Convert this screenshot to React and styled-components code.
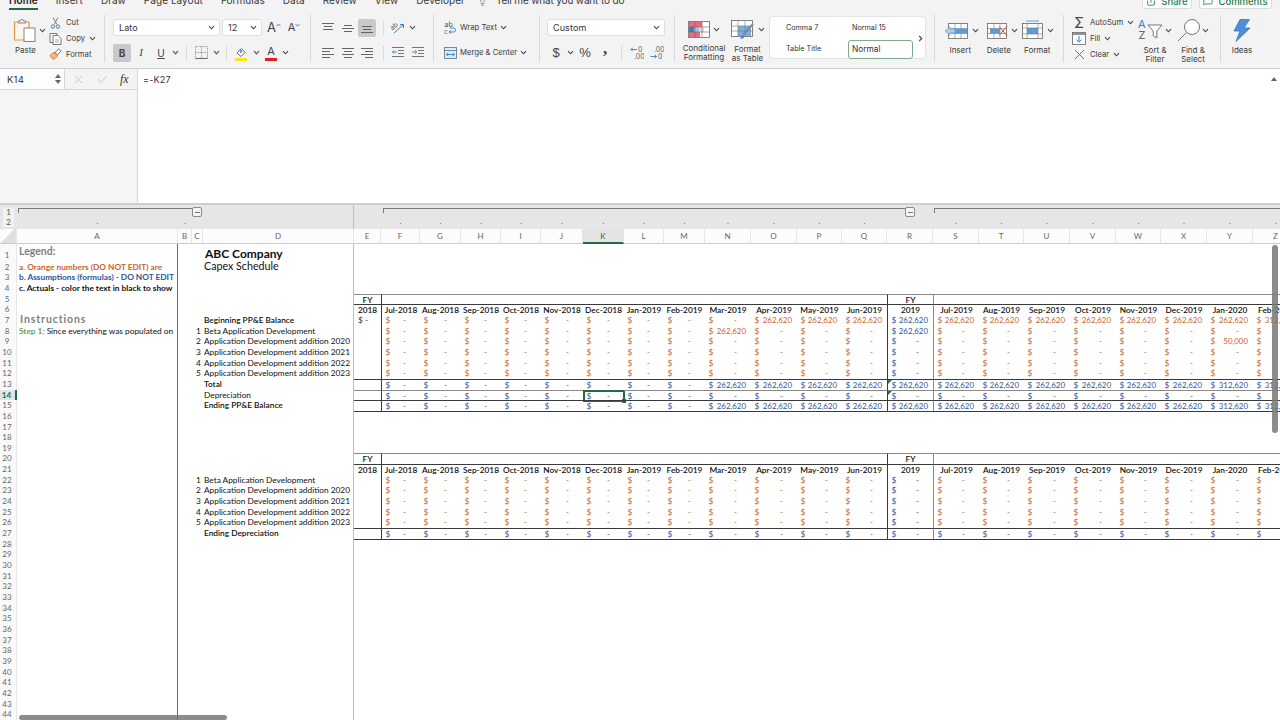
// App.jsx - Excel for Mac window with a capex schedule
import styled, { createGlobalStyle } from 'styled-components';
import { Check, Lightbulb, MessageSquare, Share, X } from 'lucide-react';

const ORANGE = '#c8642c';
const BLUE = '#2f5597';
const SANS = "'Lato', 'Open Sans', sans-serif";
const UI = "'Inter', 'Open Sans', sans-serif";

// column widths: row header, A, B, C, D, E, F ... Z
const LEFT_COLS = [17, 161, 14, 11, 151];
const RIGHT_COLS = [27, 39, 41, 40, 40, 42, 41, 40, 41, 46, 46, 45, 45, 46, 46, 45, 46, 46, 45, 46, 46, 46];
const track = (cols) => cols.map((c) => `${c}px`).join(' ');
const COLS = [...LEFT_COLS, ...RIGHT_COLS];
const LETTERS = 'ABCDEFGHIJKLMNOPQRSTUVWXYZ'.split('');

const MONTHS = [
  'Jul-2018', 'Aug-2018', 'Sep-2018', 'Oct-2018', 'Nov-2018', 'Dec-2018', 'Jan-2019', 'Feb-2019',
  'Mar-2019', 'Apr-2019', 'May-2019', 'Jun-2019', '2019', 'Jul-2019', 'Aug-2019', 'Sep-2019',
  'Oct-2019', 'Nov-2019', 'Dec-2019', 'Jan-2020', 'Feb-2020',
];

const R_INDEX = 12;
const SMALL = '262,620';
const BIG = '312,620';

const LINES = { 5: 'gray', 6: 'dark', 13: 'dark', 14: 'gray', 15: 'dark', 16: 'dark', 20: 'gray', 21: 'dark', 27: 'dark', 28: 'dark' };

const DLABELS = {
  7: ['', 'Beginning PP&E Balance', true],
  8: ['1', 'Beta Application Development'],
  9: ['2', 'Application Development addition 2020'],
  10: ['3', 'Application Development addition 2021'],
  11: ['4', 'Application Development addition 2022'],
  12: ['5', 'Application Development addition 2023'],
  13: ['', 'Total', true],
  14: ['', 'Depreciation'],
  15: ['', 'Ending PP&E Balance', true],
  22: ['1', 'Beta Application Development'],
  23: ['2', 'Application Development addition 2020'],
  24: ['3', 'Application Development addition 2021'],
  25: ['4', 'Application Development addition 2022'],
  26: ['5', 'Application Development addition 2023'],
  27: ['', 'Ending Depreciation', true],
};

function moneyValue(row, i) {
  if (row === 7) {
    if (i < 9) return '-';
    return i === 20 ? BIG : SMALL;
  }
  if (row === 8) return i === 8 || i === R_INDEX ? SMALL : '-';
  if (row === 9) return i === 19 ? '50,000' : '-';
  if (row === 13 || row === 15) {
    if (i < 8) return '-';
    return i >= 19 ? BIG : SMALL;
  }
  return '-';
}

const isMoneyRow = (n) => (n >= 7 && n <= 15) || (n >= 22 && n <= 27);
const isBlueRow = (n) => (n >= 13 && n <= 15) || n === 27;
const inTable = (n) => (n >= 5 && n <= 15) || (n >= 20 && n <= 27);

const GlobalStyle = createGlobalStyle`
  html, body {
    margin: 0;
    padding: 0;
    background: #fff;
    overflow: hidden;
  }
`;

const Page = styled.div`
  position: relative;
  width: 1280px;
  height: 720px;
  overflow: hidden;
  font-family: ${UI};
  color: #333;
`;

/* ribbon */

const Ribbon = styled.div`
  height: 68px;
  background: #f3f3f3;
  border-bottom: 1px solid #cfcfcf;
  overflow: hidden;
`;

const TabRow = styled.div`
  display: flex;
  align-items: flex-start;
  height: 17px;
  margin-top: -7px;
  padding-left: 9px;
  gap: 18px;
  font-size: 10px;
  line-height: 15px;
  color: #3a3a3a;
`;

const Tab = styled.div`
  height: 15px;
  letter-spacing: 0.05px;
  font-weight: ${(p) => (p.$active ? 600 : 400)};
  color: ${(p) => (p.$active ? '#222' : '#3a3a3a')};
  border-bottom: ${(p) => (p.$active ? '2px solid #1d6f42' : '2px solid transparent')};
`;

const TellMe = styled.div`
  display: flex;
  align-items: center;
  gap: 8px;
  height: 15px;
  margin-left: -6px;
  letter-spacing: -0.15px;
`;

const ShareArea = styled.div`
  display: flex;
  gap: 7px;
  margin-left: auto;
  margin-right: 8px;
`;

const ShareButton = styled.div`
  display: flex;
  align-items: center;
  justify-content: center;
  gap: 5px;
  width: ${(p) => p.$w}px;
  height: 16px;
  background: #fff;
  border: 1px solid #dcdcdc;
  border-radius: 3px;
  box-sizing: border-box;
  color: #1d7a4b;
  font-weight: 500;
  font-size: 9.5px;
`;

const Toolbar = styled.div`
  display: flex;
  height: 47px;
  margin-top: 5px;
`;

const Group = styled.div`
  flex: none;
  box-sizing: border-box;
  width: ${(p) => p.$w}px;
  height: 47px;
  padding-left: ${(p) => p.$pl || 0}px;
  padding-top: ${(p) => p.$pt ?? 4}px;
  border-right: ${(p) => (p.$plain ? 'none' : '1px solid #d9d9d9')};
  display: flex;
  flex-direction: ${(p) => (p.$row ? 'row' : 'column')};
  gap: ${(p) => (p.$row ? 0 : 8)}px;
`;

const Line = styled.div`
  display: flex;
  align-items: center;
  height: 17px;
  gap: ${(p) => p.$gap || 0}px;
`;

const Slot = styled.div`
  flex: none;
  display: flex;
  align-items: center;
  justify-content: center;
  position: relative;
  box-sizing: border-box;
  width: ${(p) => p.$w}px;
  height: 18px;
  margin-left: ${(p) => p.$ml || 0}px;
  border-radius: 2px;
  background: ${(p) => (p.$on ? '#c9c9c9' : 'transparent')};
`;

const Divider = styled.div`
  flex: none;
  width: 1px;
  height: 14px;
  background: #dadada;
  margin-left: ${(p) => p.$ml || 0}px;
`;

const Select = styled.div`
  flex: none;
  display: flex;
  align-items: center;
  justify-content: space-between;
  box-sizing: border-box;
  width: ${(p) => p.$w}px;
  height: 17px;
  padding: 0 4px 0 5px;
  background: #fff;
  border: 1px solid #dedede;
  border-radius: 3px;
  font-size: 9px;
  letter-spacing: 0.1px;
  color: #333;
`;

const Letter = styled.span`
  font-family: ${(p) => p.$family || UI};
  font-size: ${(p) => p.$size || 10}px;
  font-weight: ${(p) => p.$weight || 400};
  font-style: ${(p) => (p.$italic ? 'italic' : 'normal')};
  text-decoration: ${(p) => (p.$under ? 'underline' : 'none')};
  color: ${(p) => p.$color || '#444'};
  line-height: 1;
  padding-bottom: ${(p) => p.$raise || 0}px;
`;

const Label = styled.span`
  font-size: 7.7px;
  color: #3c3c3c;
  white-space: nowrap;
`;

const ColorBar = styled.div`
  position: absolute;
  left: ${(p) => p.$left}px;
  bottom: 1px;
  width: 12px;
  height: 3px;
  background: ${(p) => p.$color};
`;

const ListColumn = styled.div`
  flex: none;
  display: flex;
  flex-direction: column;
  width: ${(p) => p.$w}px;
  margin-left: ${(p) => p.$ml || 0}px;
`;

const ListRow = styled.div`
  display: flex;
  align-items: center;
  height: 17px;
  gap: ${(p) => p.$gap ?? 4}px;
`;

const ListIcon = styled.div`
  flex: none;
  display: flex;
  justify-content: center;
  width: 14px;
`;

const LargeButton = styled.div`
  flex: none;
  display: flex;
  flex-direction: column;
  align-items: center;
  width: ${(p) => p.$w}px;
  padding-top: 4px;
`;

const LargeIcon = styled.div`
  display: flex;
  align-items: center;
  gap: ${(p) => p.$gap ?? 3}px;
  height: 22px;
  margin-bottom: 4.5px;
  margin-left: ${(p) => p.$ml || 0}px;
`;

const LargeLabel = styled.div`
  font-size: 8px;
  line-height: 9px;
  text-align: center;
  white-space: nowrap;
  color: #3c3c3c;
`;

const Gallery = styled.div`
  flex: none;
  box-sizing: border-box;
  display: grid;
  grid-template-columns: 62px 65px 14px;
  grid-template-rows: 21.5px 21.5px;
  align-items: center;
  width: 157px;
  height: 43px;
  margin-top: 1px;
  padding-left: 16px;
  background: #fff;
  border: 1px solid #e3e3e3;
  border-radius: 4px;
`;

const GalleryItem = styled.div`
  box-sizing: border-box;
  height: ${(p) => (p.$on ? '19px' : 'auto')};
  padding-left: ${(p) => p.$pl || 0}px;
  font-size: ${(p) => (p.$on ? 8.3 : 7.2)}px;
  line-height: 16px;
  color: #333;
  border: ${(p) => (p.$on ? '1.5px solid #79ad8c' : 'none')};
  border-radius: 3px;
`;

const GalleryArrow = styled.div`
  grid-column: 3;
  grid-row: 1 / span 2;
  display: flex;
  justify-content: center;
`;

/* formula bar */

const FormulaArea = styled.div`
  display: flex;
  height: 136px;
  border-bottom: 2px solid #cfcfcf;
  box-sizing: border-box;
`;

const FormulaSide = styled.div`
  flex: none;
  width: 138px;
  display: flex;
  flex-direction: column;
  background: #f5f5f5;
  border-right: 1px solid #d6d6d6;
  box-sizing: border-box;
`;

const NameRow = styled.div`
  display: flex;
  align-items: center;
  height: 20px;
  background: #f3f3f3;
  border-bottom: 1px solid #d6d6d6;
`;

const NameBox = styled.div`
  flex: none;
  display: flex;
  align-items: center;
  justify-content: space-between;
  box-sizing: border-box;
  width: 65px;
  height: 20px;
  padding: 0 3px 0 7px;
  background: #fdfdfd;
  border-right: 1px solid #d6d6d6;
  font-size: 9.5px;
  letter-spacing: 0.2px;
  color: #333;
`;

const Stepper = styled.div`
  display: flex;
  flex-direction: column;
  gap: 2px;
`;

const FormulaTools = styled.div`
  display: flex;
  align-items: center;
  padding-left: 7px;
  gap: 11px;
`;

const FormulaInput = styled.div`
  position: relative;
  flex: 1;
  padding: 4px 0 0 5px;
  font-size: 9px;
  line-height: 13px;
  letter-spacing: 0.2px;
  color: #333;
  background: #fff;
`;

const ScrollCaret = styled.div`
  position: absolute;
  display: flex;
  top: 8px;
  right: 3px;
`;

/* sheet */

const OutlineBar = styled.div`
  display: flex;
  height: 24px;
  background: #e6e6e6;
`;

const OutlinePane = styled.div`
  flex: none;
  display: flex;
  flex-direction: column;
  box-sizing: border-box;
  width: ${(p) => p.$w}px;
  border-right: ${(p) => (p.$frozen ? '1px solid #bdbdbd' : 'none')};
  overflow: hidden;
`;

const BracketRow = styled.div`
  display: flex;
  align-items: flex-start;
  height: 12px;
  padding-top: 3px;
  padding-left: ${(p) => p.$pl}px;
  box-sizing: border-box;
`;

const Bracket = styled.div`
  flex: none;
  box-sizing: border-box;
  width: ${(p) => p.$w}px;
  height: 5px;
  margin-left: ${(p) => p.$ml || 0}px;
  border-top: 1.5px solid #7a7a7a;
  border-left: 1.5px solid #7a7a7a;
`;

const MinusBox = styled.div`
  flex: none;
  display: flex;
  align-items: center;
  justify-content: center;
  box-sizing: border-box;
  width: 10px;
  height: 10px;
  margin-top: -1px;
  background: #f4f4f4;
  border: 1px solid #8a8a8a;
  border-radius: 2px;
  &::before {
    content: '';
    width: 5px;
    height: 1px;
    background: #777;
  }
`;

const DotRow = styled.div`
  display: grid;
  grid-template-columns: ${(p) => track(p.$cols)};
  height: 12px;
`;

const Dot = styled.div`
  text-align: center;
  font-family: ${SANS};
  font-size: 8px;
  line-height: 8px;
  color: #555;
`;

const LevelStack = styled.div`
  position: absolute;
  left: 3px;
  top: 208px;
  display: flex;
  flex-direction: column;
`;

const LevelButton = styled.div`
  width: 11px;
  height: 9.5px;
  background: #f2f2f2;
  font-family: ${SANS};
  font-size: 8px;
  line-height: 9.5px;
  text-align: center;
  color: #555;
`;

const Row = styled.div`
  display: grid;
  grid-template-columns: ${track(COLS)};
  height: ${(p) => p.$h}px;
  font-family: ${SANS};
`;

const ColHeader = styled.div`
  box-sizing: border-box;
  height: 15px;
  text-align: center;
  font-size: 8px;
  line-height: 14px;
  color: ${(p) => (p.$on ? '#1d6f42' : '#666')};
  background: ${(p) => (p.$on ? '#e4e4e4' : '#fcfcfc')};
  border-right: 1px solid #e6e6e6;
  border-bottom: ${(p) => (p.$on ? '2px solid #1d6f42' : '1px solid #cccccc')};
`;

const Corner = styled(ColHeader)`
  background: linear-gradient(135deg, #fbfbfb 50%, #e0e0e0 50%);
`;

const RowHead = styled.div`
  box-sizing: border-box;
  height: 100%;
  text-align: center;
  padding-right: 2px;
  font-size: 8px;
  line-height: ${(p) => p.$lh}px;
  color: ${(p) => (p.$on ? '#1d6f42' : '#666')};
  font-weight: ${(p) => (p.$on ? 700 : 400)};
  background: ${(p) => (p.$on ? '#e4e4e4' : '#fafafa')};
  border-right: ${(p) => (p.$on ? '2px solid #1d6f42' : '1px solid #e6e6e6')};
`;

const lineStyle = (kind) => {
  if (kind === 'dark') return '1px solid #3a3a3a';
  if (kind === 'gray') return '1.5px solid #8a8a8a';
  return 'none';
};

const Cell = styled.div`
  position: relative;
  box-sizing: border-box;
  min-width: 0;
  height: 100%;
  padding-left: ${(p) => p.$pl || 0}px;
  white-space: nowrap;
  font-size: 8.3px;
  line-height: 10.67px;
  color: ${(p) => p.$color || '#111'};
  font-weight: ${(p) => (p.$bold ? 600 : 400)};
  text-align: ${(p) => (p.$center ? 'center' : 'left')};
  border-top: ${(p) => lineStyle(p.$top)};
  border-left: ${(p) => lineStyle(p.$left)};
  border-right: ${(p) => (p.$edge === 'dark' ? '1.5px solid #666' : p.$edge === 'light' ? '1px solid #bdbdbd' : 'none')};
`;

const MoneyCell = styled(Cell)`
  display: flex;
  justify-content: space-between;
`;

const Dollar = styled.span`
  margin-left: 3.5px;
`;

const Amount = styled.span`
  font-size: 7.9px;
  margin-right: ${(p) => (p.$dash ? 14 : 5)}px;
`;

const Selection = styled.div`
  position: absolute;
  left: 0;
  right: -1px;
  top: -1px;
  bottom: -1px;
  border: 2px solid #1d6f42;
  &::after {
    content: '';
    position: absolute;
    right: -3px;
    bottom: -3px;
    width: 4px;
    height: 4px;
    background: #1d6f42;
  }
`;

const ErrorMark = styled.div`
  position: absolute;
  top: 0;
  left: 0;
  width: 0;
  height: 0;
  border-top: 4px solid #1d7a3c;
  border-right: 4px solid transparent;
`;

const ColorText = styled.span`
  color: ${(p) => p.$color};
  font-weight: 700;
`;

const Heading = styled.div`
  font-size: ${(p) => p.$size}px;
  font-weight: ${(p) => p.$weight || 400};
  line-height: ${(p) => p.$lh}px;
  color: ${(p) => p.$color || '#111'};
  letter-spacing: ${(p) => p.$track || 0}px;
  margin-top: ${(p) => p.$mt || 0}px;
  margin-left: ${(p) => p.$ml || 0}px;
`;

const ScrollThumb = styled.div`
  position: absolute;
  background: rgba(120, 120, 120, 0.85);
  border-radius: 3px;
  left: ${(p) => p.$x}px;
  top: ${(p) => p.$y}px;
  width: ${(p) => p.$w}px;
  height: ${(p) => p.$h}px;
`;

/* icons */

const Chev = ({ dir = 'down' }) => (
  <svg width="7" height="7" viewBox="0 0 7 7" style={dir === 'right' ? { transform: 'rotate(-90deg)' } : undefined}>
    <path d="M1 2.2 3.5 4.8 6 2.2" fill="none" stroke="#444" strokeWidth="1.1" />
  </svg>
);

const PasteIcon = () => (
  <svg width="23" height="23" viewBox="0 0 23 23">
    <path d="M4 3H1.5v18H16V3h-2.5" fill="#fbf5ec" stroke="#dd9a4c" strokeWidth="1.2" />
    <path d="M5 4V2h2.2a1.6 1.6 0 0 1 3.2 0h2.4v2z" fill="#f6f6f6" stroke="#777" strokeWidth="0.9" />
    <rect x="11" y="9" width="11" height="13.5" fill="#fff" stroke="#777" strokeWidth="0.9" />
  </svg>
);

const CutIcon = () => (
  <svg width="11" height="12" viewBox="0 0 11 12">
    <path d="M3 0.5 7 7.6M8 0.5 4 7.6" fill="none" stroke="#6f6f6f" strokeWidth="0.9" />
    <circle cx="3" cy="9.6" r="1.7" fill="none" stroke="#3f6fa6" strokeWidth="0.9" />
    <circle cx="8" cy="9.6" r="1.7" fill="none" stroke="#3f6fa6" strokeWidth="0.9" />
  </svg>
);

const CopyIcon = () => (
  <svg width="13" height="12" viewBox="0 0 13 12">
    <path d="M8 2.5V.5H1v9h3" fill="#fff" stroke="#666" strokeWidth="0.9" />
    <path d="M4 2.5h5l3 3v6H4z" fill="#fff" stroke="#666" strokeWidth="0.9" />
    <path d="M6 7h4M6 9h4" stroke="#888" strokeWidth="0.7" />
  </svg>
);

const BrushIcon = () => (
  <svg width="13" height="12" viewBox="0 0 13 12">
    <path d="M1 7.5 5 4l3.5 4-3.5 3.5C4 11 2 9.5 1 7.5z" fill="#f0b985" stroke="#cf7a34" strokeWidth="0.9" />
    <path d="M6 4.5 10 .8l2 2-3.4 4z" fill="#fff" stroke="#666" strokeWidth="0.9" />
  </svg>
);

const Caret = ({ up, color = '#3f7fbf' }) => (
  <svg width="5" height="4" viewBox="0 0 5 4" style={{ marginBottom: 5 }}>
    <path d={up ? 'M.5 3.2 2.5 1l2 2.2' : 'M.5 1l2 2.2L4.5 1'} fill="none" stroke={color} strokeWidth="0.9" />
  </svg>
);

const BorderIcon = () => (
  <svg width="13" height="13" viewBox="0 0 13 13">
    <path d="M.5.5h12v12H.5zM6.5.5v12M.5 6.5h12" fill="none" stroke="#999" strokeWidth="0.9" strokeDasharray="1.4 0.8" />
    <path d="M.5 12.5h12" stroke="#666" strokeWidth="1" />
  </svg>
);

const BucketIcon = () => (
  <svg width="11" height="11" viewBox="0 0 11 11">
    <path d="M1 6 5.5 1.5 9 5.5 5 9.5z" fill="#fff" stroke="#555" strokeWidth="0.9" />
    <path d="M5 3v3" stroke="#1e78c8" strokeWidth="1.4" />
  </svg>
);

const RuleLines = ({ rows, width = 12 }) => (
  <svg width={width} height="12" viewBox={`0 0 ${width} 12`}>
    {rows.map(([x1, x2, y]) => (
      <path key={`${x1}-${y}`} d={`M${x1} ${y + 0.5}H${x2}`} stroke="#555" strokeWidth="0.9" />
    ))}
  </svg>
);

const TOP_RULES = [[0, 12, 1], [2, 10, 4], [1, 11, 7]];
const MIDDLE_RULES = [[2, 10, 3], [0, 12, 6], [2, 10, 9]];
const BOTTOM_RULES = [[1, 11, 4], [2, 10, 7], [0, 12, 10]];
const LEFT_RULES = [[0, 12, 1], [0, 8, 4], [0, 12, 7], [0, 8, 10]];
const CENTER_RULES = [[0, 12, 1], [2, 10, 4], [0, 12, 7], [2, 10, 10]];
const RIGHT_RULES = [[0, 12, 1], [4, 12, 4], [0, 12, 7], [4, 12, 10]];

const OrientIcon = () => (
  <svg width="14" height="13" viewBox="0 0 14 13">
    <text x="0" y="8" fontSize="7" fill="#666" fontFamily="Inter" transform="rotate(-40 3 7)">ab</text>
    <path d="M3 12 12 4M9 3.5 12.5 3.5 12.5 7" fill="none" stroke="#2f7fd0" strokeWidth="1" />
  </svg>
);

const IndentIcon = ({ flip }) => (
  <svg width="12" height="11" viewBox="0 0 12 11">
    <path d="M0 .5h12M6 3.5h6M6 6.5h6M0 9.5h12" stroke="#666" strokeWidth="0.9" />
    <path d={flip ? 'M0 5h4.5M3 3.3 4.8 5 3 6.7' : 'M5 5H.5M2.2 3.3.5 5l1.7 1.7'} fill="none" stroke="#2f7fd0" strokeWidth="0.9" />
  </svg>
);

const WrapIcon = () => (
  <svg width="12" height="15" viewBox="0 0 12 15">
    <text x="0.5" y="6.5" fontSize="7" fill="#555" fontFamily="Inter">ab</text>
    <text x="0" y="14" fontSize="7" fill="#777" fontFamily="Inter">c</text>
    <path d="M5 12h4.5a1.8 1.8 0 0 0 0-4H6M6.8 10.4 5 12l1.8 1.6" fill="none" stroke="#2f7fd0" strokeWidth="0.9" />
  </svg>
);

const MergeIcon = () => (
  <svg width="13" height="12" viewBox="0 0 13 12">
    <rect x=".5" y=".5" width="12" height="11" fill="#dcebf7" stroke="#6b7f8f" strokeWidth="0.9" />
    <path d="M.5 3.5h12" stroke="#6b7f8f" strokeWidth="0.9" />
    <path d="M2.5 7.5h8M4.3 6 2.5 7.5 4.3 9M8.7 6l1.8 1.5L8.7 9" fill="none" stroke="#2f7fd0" strokeWidth="0.9" />
  </svg>
);

const DecimalIcon = ({ more }) => (
  <svg width="14" height="14" viewBox="0 0 14 14">
    <text x={more ? 4 : 8} y="6" fontSize="7" fill="#666" fontFamily="Inter">{more ? '.00' : '0'}</text>
    <text x={more ? 8 : 4} y="13" fontSize="7" fill="#666" fontFamily="Inter">{more ? '0' : '.00'}</text>
    <path d={more ? 'M.5 10.5h6M4.7 8.7 6.5 10.5 4.7 12.3' : 'M7 3.5H1M2.8 1.7 1 3.5l1.8 1.8'} fill="none" stroke="#2f7fd0" strokeWidth="0.9" />
  </svg>
);

const CondIcon = () => (
  <svg width="22" height="17" viewBox="0 0 22 17">
    <rect x=".5" y=".5" width="21" height="16" fill="#fff" stroke="#666" strokeWidth="0.8" />
    <rect x="1" y="1" width="13" height="5" fill="#ec6a80" />
    <rect x="1" y="6" width="5" height="5" fill="#3c7dc4" />
    <rect x="6" y="6" width="5" height="5" fill="#9cc3e6" />
    <rect x="11" y="6" width="5" height="5" fill="#f8d7da" />
    <rect x="1" y="11" width="11" height="5" fill="#ec6a80" />
    <path d="M7 .5v16M14 .5v16M.5 6h21M.5 11h21" stroke="#666" strokeWidth="0.6" />
  </svg>
);

const TableIcon = () => (
  <svg width="24" height="21" viewBox="0 0 24 21">
    <rect x=".5" y="1.5" width="21" height="16" fill="#fff" stroke="#666" strokeWidth="0.8" />
    <rect x="7" y="7" width="13" height="10" fill="#7aaee4" />
    <path d="M7 1.5v16M14 1.5v16M.5 7h21M.5 12h21" stroke="#777" strokeWidth="0.6" />
    <path d="M22 5 12 16" stroke="#7a8a9a" strokeWidth="2" />
    <path d="M12 16l-3 4 4-1z" fill="#3c7dc4" />
  </svg>
);

const GridFrame = ({ children }) => (
  <svg width="25" height="19" viewBox="0 0 25 19">
    <rect x="3.5" y="2.5" width="19" height="15" fill="#fff" stroke="#666" strokeWidth="0.8" />
    <path d="M10 2.5v15M16 2.5v15M3.5 7.5h19M3.5 12.5h19" stroke="#777" strokeWidth="0.6" />
    {children}
  </svg>
);

const InsertCells = () => (
  <GridFrame>
    <rect x="8" y="7.5" width="14" height="5" fill="#5d9bd8" />
    <path d="M0 10 5 5.5V8h5v4H5v2.5z" fill="#a9cdee" stroke="#5d9bd8" strokeWidth="0.6" />
  </GridFrame>
);

const DeleteCells = () => (
  <GridFrame>
    <rect x="6" y="7.5" width="10" height="5" fill="#5d9bd8" />
    <path d="M15 5.5l8 9M23 5.5l-8 9" stroke="#e0453c" strokeWidth="1" />
  </GridFrame>
);

const FormatCells = () => (
  <svg width="24" height="20" viewBox="0 0 24 20">
    <rect x="1.5" y="3.5" width="20" height="15" fill="#fff" stroke="#666" strokeWidth="0.8" />
    <rect x="6" y="8" width="11" height="6" fill="#5d9bd8" />
    <path d="M6 3.5v15M17 3.5v15M1.5 8h20M1.5 14h20" stroke="#777" strokeWidth="0.6" />
    <path d="M5 1h13" stroke="#5d9bd8" strokeWidth="1" />
  </svg>
);

const FillDown = () => (
  <svg width="14" height="13" viewBox="0 0 14 13">
    <rect x=".5" y=".5" width="13" height="12" fill="#fff" stroke="#666" strokeWidth="0.8" />
    <path d="M.5 2h13" stroke="#666" strokeWidth="1.4" />
    <path d="M7 4v6M4.5 7.6 7 10.2l2.5-2.6" fill="none" stroke="#2f7fd0" strokeWidth="1" />
  </svg>
);

const ClearX = () => (
  <svg width="11" height="11" viewBox="0 0 11 11">
    <path d="M1 1l9 9M10 1l-9 9" stroke="#e0453c" strokeWidth="1" />
  </svg>
);

const SortIcon = () => (
  <svg width="26" height="22" viewBox="0 0 26 22">
    <text x="0" y="9" fontSize="11" fill="#2f7fd0" fontFamily="Inter">A</text>
    <text x="0.5" y="20" fontSize="11" fill="#666" fontFamily="Inter">Z</text>
    <path d="M10 6h14l-5.2 6v7l-3.6-2.2V12z" fill="#fff" stroke="#666" strokeWidth="0.9" />
  </svg>
);

const FindIcon = () => (
  <svg width="24" height="24" viewBox="0 0 24 24">
    <circle cx="15" cy="9" r="7.5" fill="#fff" stroke="#666" strokeWidth="0.9" />
    <path d="M9.5 14.5 1 23" stroke="#666" strokeWidth="0.9" />
  </svg>
);

const IdeasIcon = () => (
  <svg width="18" height="23" viewBox="0 0 18 23">
    <path d="M7 .5h9.5L11 9h6L3 22.5 7 12H1z" fill="#4a90dc" stroke="#2c6db4" strokeWidth="0.7" />
  </svg>
);

const Triangle = ({ up }) => (
  <svg width="6" height="4" viewBox="0 0 6 4" style={{ display: 'block' }}>
    <path d={up ? 'M3 0 6 4H0z' : 'M3 4 6 0H0z'} fill="#666" />
  </svg>
);

const TABS = ['Insert', 'Draw', 'Page Layout', 'Formulas', 'Data', 'Review', 'View', 'Developer'];

function RibbonBar() {
  return (
    <Ribbon>
      <TabRow>
        <Tab $active>Home</Tab>
        {TABS.map((t) => (
          <Tab key={t}>{t}</Tab>
        ))}
        <TellMe>
          <Lightbulb size={11} strokeWidth={1.3} />
          Tell me what you want to do
        </TellMe>
        <ShareArea>
          <ShareButton $w={50}>
            <Share size={10} />
            Share
          </ShareButton>
          <ShareButton $w={73}>
            <MessageSquare size={10} />
            Comments
          </ShareButton>
        </ShareArea>
      </TabRow>
      <Toolbar>
        <Group $w={105} $pt={0} $row>
          <LargeButton $w={51}>
            <LargeIcon $ml={8}>
              <PasteIcon />
              <Chev />
            </LargeIcon>
            <LargeLabel>Paste</LargeLabel>
          </LargeButton>
          <ListColumn $w={50} $ml={-3}>
            <ListRow><ListIcon><CutIcon /></ListIcon><Label>Cut</Label></ListRow>
            <ListRow><ListIcon><CopyIcon /></ListIcon><Label>Copy</Label><Chev /></ListRow>
            <ListRow><ListIcon><BrushIcon /></ListIcon><Label>Format</Label></ListRow>
          </ListColumn>
        </Group>

        <Group $w={206} $pl={8}>
          <Line $gap={2}>
            <Select $w={107}>Lato<Chev /></Select>
            <Select $w={40}>12<Chev /></Select>
            <Slot $w={18} $ml={1}><Letter $size={13}>A</Letter><Caret up /></Slot>
            <Slot $w={18}><Letter $size={11}>A</Letter><Caret /></Slot>
          </Line>
          <Line>
            <Slot $w={18} $on><Letter $weight={700} $size={10}>B</Letter></Slot>
            <Slot $w={20}><Letter $italic $family="'Liberation Serif', serif" $size={11}>I</Letter></Slot>
            <Slot $w={20}><Letter $under $size={10}>U</Letter></Slot>
            <Slot $w={8}><Chev /></Slot>
            <Divider $ml={7} />
            <Slot $w={22} $ml={3}><BorderIcon /></Slot>
            <Slot $w={8}><Chev /></Slot>
            <Divider $ml={6} />
            <Slot $w={21} $ml={4}><BucketIcon /><ColorBar $left={4} $color="#f5e618" /></Slot>
            <Slot $w={8}><Chev /></Slot>
            <Slot $w={20} $ml={1}><Letter $size={11} $raise={2}>A</Letter><ColorBar $left={4} $color="#d81e1e" /></Slot>
            <Slot $w={8}><Chev /></Slot>
          </Line>
        </Group>

        <Group $w={123} $pl={7}>
          <Line>
            <Slot $w={20}><RuleLines rows={TOP_RULES} /></Slot>
            <Slot $w={20}><RuleLines rows={MIDDLE_RULES} /></Slot>
            <Slot $w={18} $on><RuleLines rows={BOTTOM_RULES} /></Slot>
            <Divider $ml={7} />
            <Slot $w={20} $ml={4}><OrientIcon /></Slot>
            <Slot $w={9}><Chev /></Slot>
          </Line>
          <Line>
            <Slot $w={20}><RuleLines rows={LEFT_RULES} /></Slot>
            <Slot $w={20}><RuleLines rows={CENTER_RULES} /></Slot>
            <Slot $w={18}><RuleLines rows={RIGHT_RULES} /></Slot>
            <Divider $ml={7} />
            <Slot $w={20} $ml={4}><IndentIcon /></Slot>
            <Slot $w={20}><IndentIcon flip /></Slot>
          </Line>
        </Group>

        <Group $w={106} $pl={9}>
          <Line $gap={3}>
            <Slot $w={14}><WrapIcon /></Slot>
            <Label>Wrap Text</Label>
            <Chev />
          </Line>
          <Line $gap={3}>
            <Slot $w={14}><MergeIcon /></Slot>
            <Label>Merge &amp; Center</Label>
            <Chev />
          </Line>
        </Group>

        <Group $w={135} $pl={7}>
          <Line>
            <Select $w={118}>Custom<Chev /></Select>
          </Line>
          <Line>
            <Slot $w={18}><Letter $size={13} $family="'Liberation Sans', sans-serif">$</Letter></Slot>
            <Slot $w={10}><Chev /></Slot>
            <Slot $w={20}><Letter $size={13} $family="'Liberation Sans', sans-serif">%</Letter></Slot>
            <Slot $w={20}><Letter $size={17} $weight={700} $raise={9} $family="'Liberation Serif', serif">,</Letter></Slot>
            <Divider $ml={6} />
            <Slot $w={20} $ml={5}><DecimalIcon /></Slot>
            <Slot $w={19}><DecimalIcon more /></Slot>
          </Line>
        </Group>

        <Group $w={94} $pl={7} $pt={0} $plain $row>
          <LargeButton $w={44}>
            <LargeIcon><CondIcon /><Chev /></LargeIcon>
            <LargeLabel>Conditional<br />Formatting</LargeLabel>
          </LargeButton>
          <LargeButton $w={43}>
            <LargeIcon><TableIcon /><Chev /></LargeIcon>
            <LargeLabel>Format<br />as Table</LargeLabel>
          </LargeButton>
        </Group>

        <Group $w={166} $pt={0}>
          <Gallery>
            <GalleryItem>Comma 7</GalleryItem>
            <GalleryItem $pl={4}>Normal 15</GalleryItem>
            <GalleryArrow><Chev dir="right" /></GalleryArrow>
            <GalleryItem>Table Title</GalleryItem>
            <GalleryItem $on $pl={3}>Normal</GalleryItem>
          </Gallery>
        </Group>

        <Group $w={129} $pl={6} $pt={0} $row>
          <LargeButton $w={38.5}>
            <LargeIcon $ml={4} $gap={2}><InsertCells /><Chev /></LargeIcon>
            <LargeLabel>Insert</LargeLabel>
          </LargeButton>
          <LargeButton $w={38.5}>
            <LargeIcon $ml={4} $gap={2}><DeleteCells /><Chev /></LargeIcon>
            <LargeLabel>Delete</LargeLabel>
          </LargeButton>
          <LargeButton $w={38.5}>
            <LargeIcon $gap={2}><FormatCells /><Chev /></LargeIcon>
            <LargeLabel>Format</LargeLabel>
          </LargeButton>
        </Group>

        <Group $w={157} $pt={0} $row>
          <ListColumn $w={64} $ml={8}>
            <ListRow><ListIcon><Letter $size={14}>Σ</Letter></ListIcon><Label>AutoSum</Label><Chev /></ListRow>
            <ListRow><ListIcon><FillDown /></ListIcon><Label>Fill</Label><Chev /></ListRow>
            <ListRow><ListIcon><ClearX /></ListIcon><Label>Clear</Label><Chev /></ListRow>
          </ListColumn>
          <LargeButton $w={38}>
            <LargeIcon $gap={1}><SortIcon /><Chev /></LargeIcon>
            <LargeLabel>Sort &amp;<br />Filter</LargeLabel>
          </LargeButton>
          <LargeButton $w={38}>
            <LargeIcon $gap={1}><FindIcon /><Chev /></LargeIcon>
            <LargeLabel>Find &amp;<br />Select</LargeLabel>
          </LargeButton>
        </Group>

        <Group $w={42} $pt={0} $plain $row>
          <LargeButton $w={42}>
            <LargeIcon><IdeasIcon /></LargeIcon>
            <LargeLabel>Ideas</LargeLabel>
          </LargeButton>
        </Group>
      </Toolbar>
    </Ribbon>
  );
}

function FormulaBar() {
  return (
    <FormulaArea>
      <FormulaSide>
        <NameRow>
          <NameBox>
            K14
            <Stepper>
              <Triangle up />
              <Triangle />
            </Stepper>
          </NameBox>
          <FormulaTools>
            <X size={13} strokeWidth={1.3} color="#b5b5b5" />
            <Check size={13} strokeWidth={1.3} color="#b5b5b5" />
            <Letter $size={12} $italic $family="'Liberation Serif', serif" $color="#333">fx</Letter>
          </FormulaTools>
        </NameRow>
      </FormulaSide>
      <FormulaInput>
        =-K27
        <ScrollCaret><Triangle up /></ScrollCaret>
      </FormulaInput>
    </FormulaArea>
  );
}

function Outline() {
  const leftDots = ['', '.', '.', '', ''];
  const rightDots = RIGHT_COLS.map((_, i) => (i === 0 || i === R_INDEX + 1 ? '' : '.'));
  return (
    <OutlineBar>
      <OutlinePane $w={354} $frozen>
        <BracketRow $pl={18}>
          <Bracket $w={174} />
          <MinusBox />
        </BracketRow>
        <DotRow $cols={LEFT_COLS}>
          {leftDots.map((d, i) => (
            <Dot key={i}>{d}</Dot>
          ))}
        </DotRow>
      </OutlinePane>
      <OutlinePane $w={926}>
        <BracketRow $pl={29}>
          <Bracket $w={522} />
          <MinusBox />
          <Bracket $w={360} $ml={19} />
        </BracketRow>
        <DotRow $cols={RIGHT_COLS}>
          {rightDots.map((d, i) => (
            <Dot key={i}>{d}</Dot>
          ))}
        </DotRow>
      </OutlinePane>
    </OutlineBar>
  );
}

function ColumnTitles() {
  return (
    <Row $h={15}>
      <Corner />
      {COLS.slice(1).map((_, i) => (
        <ColHeader key={LETTERS[i]} $on={LETTERS[i] === 'K'}>{LETTERS[i]}</ColHeader>
      ))}
    </Row>
  );
}

function LegendCell({ n }) {
  if (n === 1) return <Heading $size={10.5} $weight={700} $lh={15} $color="#7f7f7f">Legend:</Heading>;
  if (n === 2) return <ColorText $color={ORANGE}>a. Orange numbers (DO NOT EDIT) are</ColorText>;
  if (n === 3) return <ColorText $color={BLUE}>b. Assumptions (formulas) - DO NOT EDIT</ColorText>;
  if (n === 4) return <ColorText $color="#111">c. Actuals - color the text in black to show</ColorText>;
  if (n === 7) return <Heading $size={10.5} $weight={700} $lh={10.67} $color="#808080" $track={0.9} $mt={-1} $ml={1}>Instructions</Heading>;
  if (n === 8) return <><ColorText $color="#6aa842">Step 1:</ColorText> Since everything was populated on</>;
  return null;
}

function fyText(n, col) {
  // col: 'E' or 'R'
  if (n === 5 || n === 20) return 'FY';
  if (n === 6 || n === 21) return col === 'E' ? '2018' : '2019';
  return '';
}

function DataCells({ n }) {
  const table = inTable(n);
  const top = LINES[n];
  const headerRow = n === 6 || n === 21;
  const fyRow = n === 5 || n === 20;

  return RIGHT_COLS.slice(1).map((_, i) => {
    const isR = i === R_INDEX;
    const isS = i === R_INDEX + 1;
    let left;
    if (table && (i === 0 || isR)) left = 'dark';
    if (table && isS) left = 'gray';
    const key = `${n}-${i}`;

    if (isMoneyRow(n)) {
      const color = isBlueRow(n) || isR ? BLUE : ORANGE;
      const value = moneyValue(n, i);
      const selected = n === 14 && i === 5;
      return (
        <MoneyCell key={key} $top={top} $left={left} $color={color}>
          <Dollar>$</Dollar>
          <Amount $dash={value === '-'}>{value}</Amount>
          {selected && <Selection />}
          {isR && (n === 13 || n === 14) && <ErrorMark />}
        </MoneyCell>
      );
    }
    if (headerRow) {
      return <Cell key={key} $top={top} $left={left} $center $bold>{MONTHS[i]}</Cell>;
    }
    if (fyRow && isR) {
      return <Cell key={key} $top={top} $left={left} $center $bold>FY</Cell>;
    }
    return <Cell key={key} $top={top} $left={left} />;
  });
}

function SheetRow({ n }) {
  const h = n === 1 ? 17.67 : 10.667;
  const top = LINES[n];
  const label = DLABELS[n];
  const fy = fyText(n, 'E');

  let eCell = <Cell $top={top} />;
  if (fy) eCell = <Cell $top={top} $center $bold>{fy}</Cell>;
  if (n === 7) eCell = <Cell $pl={4} $color="#333">$ -</Cell>;

  let dContent = label ? label[1] : null;
  if (n === 1) dContent = <Heading $size={12} $weight={700} $lh={20} $ml={1}>ABC Company</Heading>;
  if (n === 2) dContent = <Heading $size={10.7} $lh={10} $mt={-1}>Capex Schedule</Heading>;

  return (
    <Row $h={h}>
      <RowHead $on={n === 14} $lh={n === 1 ? 23 : 10.67}>{n}</RowHead>
      <Cell $pl={2} $edge="dark"><LegendCell n={n} /></Cell>
      <Cell />
      <Cell $pl={4}>{label ? label[0] : ''}</Cell>
      <Cell $pl={1} $edge="light" $bold={label && label[2]}>{dContent}</Cell>
      {eCell}
      <DataCells n={n} />
    </Row>
  );
}

export default function App() {
  const rows = Array.from({ length: 44 }, (_, i) => i + 1);
  return (
    <Page>
      <GlobalStyle />
      <RibbonBar />
      <FormulaBar />
      <Outline />
      <ColumnTitles />
      {rows.map((n) => (
        <SheetRow key={n} n={n} />
      ))}
      <LevelStack>
        <LevelButton>1</LevelButton>
        <LevelButton>2</LevelButton>
      </LevelStack>
      <ScrollThumb $x={1272} $y={245} $w={6} $h={188} />
      <ScrollThumb $x={19} $y={715} $w={208} $h={5} />
    </Page>
  );
}
